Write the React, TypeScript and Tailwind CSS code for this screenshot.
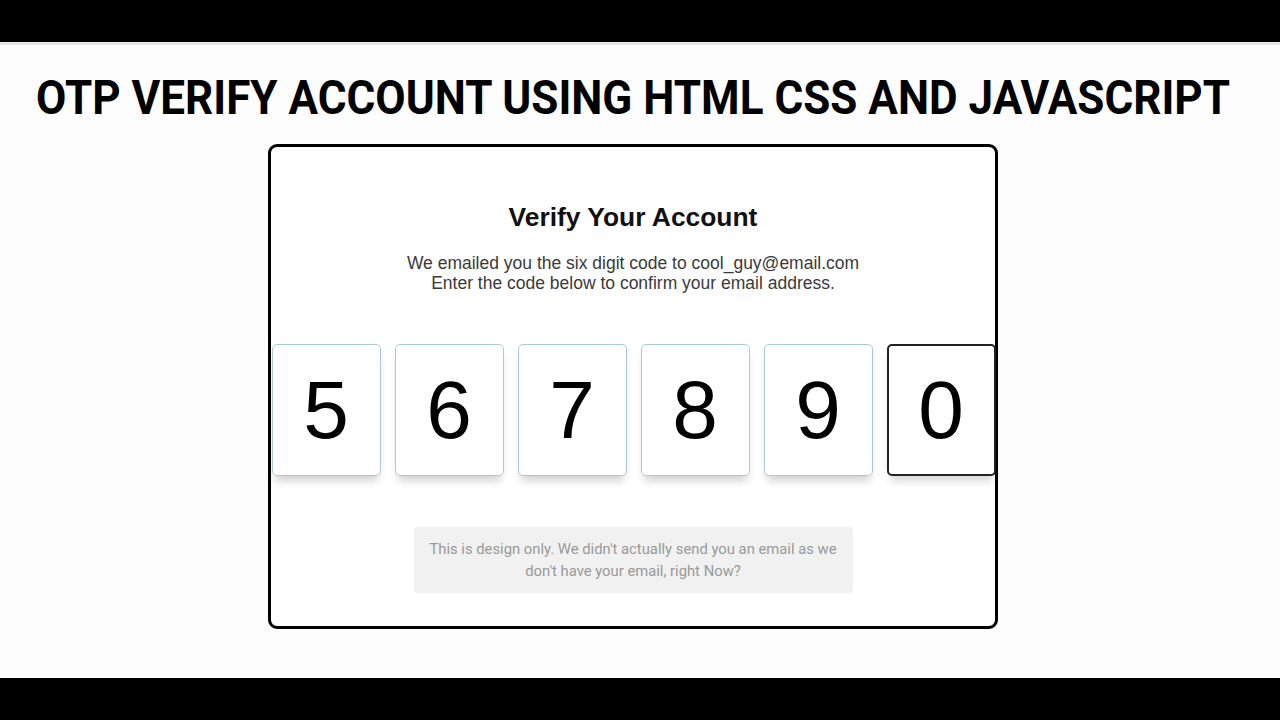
import React, { useLayoutEffect, useRef, useState } from "react";

const digits = ["5", "6", "7", "8", "9", "0"];

function FitTitle({ text, width }: { text: string; width: number }) {
  const ref = useRef<HTMLSpanElement>(null);
  const [scale, setScale] = useState(1);
  useLayoutEffect(() => {
    if (ref.current) {
      const w = ref.current.getBoundingClientRect().width;
      if (w > 0) setScale(width / w);
    }
  }, [text, width]);
  return (
    <span
      ref={ref}
      className="inline-block origin-left whitespace-nowrap"
      style={{ transform: `scaleX(${scale})` }}
    >
      {text}
    </span>
  );
}

export default function App() {
  return (
    <div className="flex h-[720px] w-[1280px] flex-col overflow-hidden bg-[#fdfdfd]">
      <div className="h-[42px] shrink-0 bg-black" />
      <div className="h-[3px] shrink-0 bg-[#e6e6e6]" />
      <div className="flex-1">
        <h1
          className="mt-[23px] ml-[36px] text-[49px] leading-[60px] font-bold text-black"
          style={{ fontFamily: 'Roboto, "DejaVu Sans", sans-serif' }}
        >
          <FitTitle text="OTP VERIFY ACCOUNT USING HTML CSS AND JAVASCRIPT" width={1194} />
        </h1>
        <div className="mt-[16px] ml-[268px] flex h-[485px] w-[730px] flex-col items-center rounded-[9px] border-[3px] border-black bg-white">
          <h2
            className="mt-[55px] text-[26.4px] leading-[30px] font-bold text-[#111]"
            style={{ fontFamily: '"Liberation Sans", Arial, sans-serif' }}
          >
            Verify Your Account
          </h2>
          <p
            className="mt-[21px] text-center text-[17.5px] leading-[20px] text-[#3a3a3a]"
            style={{ fontFamily: '"Liberation Sans", Arial, sans-serif' }}
          >
            We emailed you the six digit code to cool_guy@email.com
            <br />
            Enter the code below to confirm your email address.
          </p>
          <div className="mt-[51px] ml-[1px] flex gap-[14px]">
            {digits.map((d, i) => (
              <div
                key={i}
                className={
                  i === 5
                    ? "flex h-[132px] w-[109px] items-center justify-center rounded-[5px] border-2 border-[#222] bg-white shadow-[0_8px_8px_-3px_rgba(0,0,0,0.16)]"
                    : "flex h-[132px] w-[109px] items-center justify-center rounded-[5px] border border-[#a8cbd8] bg-white shadow-[0_8px_8px_-3px_rgba(0,0,0,0.18)]"
                }
              >
                <span
                  className="text-[82px] leading-none text-black"
                  style={{ fontFamily: '"Liberation Sans", Arial, sans-serif' }}
                >
                  {d}
                </span>
              </div>
            ))}
          </div>
          <div
            className="mt-[51px] flex h-[66px] w-[439px] flex-col items-center justify-center rounded-[4px] bg-[#f1f1f1] text-center text-[14.8px] leading-[22px] text-[#999]"
            style={{ fontFamily: 'Roboto, "Liberation Sans", sans-serif' }}
          >
            <span>This is design only. We didn't actually send you an email as we</span>
            <span>don't have your email, right Now?</span>
          </div>
        </div>
      </div>
      <div className="h-[42px] shrink-0 bg-black" />
    </div>
  );
}
